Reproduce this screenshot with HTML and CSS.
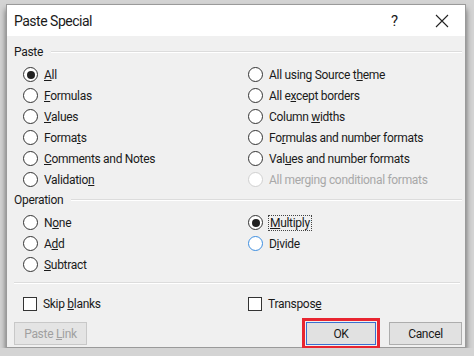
FILE: index.html
```html
<!DOCTYPE html>
<html lang="en">
<head>
    <meta charset="UTF-8">
    <title>Paste Special</title>
    <link rel="stylesheet" href="styles.css">
</head>
<body>

<div class="dialog">
    <div class="titlebar">
        <span class="title">Paste Special</span>
        <span class="help">?</span>
        <span class="close">
            <svg width="14" height="14" viewBox="0 0 14 14"><path d="M1 1L13 13M13 1L1 13" stroke="#222" stroke-width="1.1" fill="none"/></svg>
        </span>
    </div>

    <div class="content">
        <div class="group-title">Paste</div>
        <div class="options">
            <label class="opt"><span class="radio checked"></span><span><u>A</u>ll</span></label>
            <label class="opt"><span class="radio"></span><span>All using Source t<u>h</u>eme</span></label>
            <label class="opt"><span class="radio"></span><span><u>F</u>ormulas</span></label>
            <label class="opt"><span class="radio"></span><span>All e<u>x</u>cept borders</span></label>
            <label class="opt"><span class="radio"></span><span><u>V</u>alues</span></label>
            <label class="opt"><span class="radio"></span><span>Column <u>w</u>idths</span></label>
            <label class="opt"><span class="radio"></span><span>Forma<u>t</u>s</span></label>
            <label class="opt"><span class="radio"></span><span>Fo<u>r</u>mulas and number formats</span></label>
            <label class="opt"><span class="radio"></span><span><u>C</u>omments and Notes</span></label>
            <label class="opt"><span class="radio"></span><span>Val<u>u</u>es and number formats</span></label>
            <label class="opt"><span class="radio"></span><span>Validatio<u>n</u></span></label>
            <label class="opt disabled"><span class="radio"></span><span>All merging conditional formats</span></label>
        </div>

        <div class="group-title op">Operation</div>
        <div class="options">
            <label class="opt"><span class="radio"></span><span>N<u>o</u>ne</span></label>
            <label class="opt"><span class="radio checked"></span><span class="focus"><u>M</u>ultiply</span></label>
            <label class="opt"><span class="radio"></span><span>A<u>d</u>d</span></label>
            <label class="opt"><span class="radio hover"></span><span>D<u>i</u>vide</span></label>
            <label class="opt"><span class="radio"></span><span><u>S</u>ubtract</span></label>
        </div>

        <div class="divider"></div>

        <div class="options checks">
            <label class="opt"><span class="check"></span><span>Skip <u>b</u>lanks</span></label>
            <label class="opt"><span class="check"></span><span>Transpos<u>e</u></span></label>
        </div>

        <div class="buttons">
            <button class="btn disabled">Paste <u>L</u>ink</button>
            <span class="spacer"></span>
            <span class="mark"><button class="btn">OK</button></span>
            <button class="btn">Cancel</button>
        </div>
    </div>
</div>

</body>
</html>
```

FILE: styles.css
```css
body {
    margin: 0;
    background-color: #d4d4d4;
    font-family: Roboto, Arial, sans-serif;
    font-size: 12px;
    letter-spacing: -0.3px;
    color: #1a1a1a;
}
.dialog {
    margin: 4px 0 0 6px;
    width: 458px;
    height: 342px;
    background-color: #f0f0f0;
    border: 1px solid #9a9a9a;
    box-shadow: 0 5px 6px rgba(0, 0, 0, 0.55);
}
.titlebar {
    display: flex;
    align-items: center;
    height: 31px;
    background-color: #fff;
    padding-left: 7px;
}
.title {
    flex: 1;
    font-size: 14px;
    letter-spacing: -0.5px;
}
.help {
    font-size: 15px;
    width: 47px;
    text-align: center;
}
.close {
    width: 47px;
    display: flex;
    justify-content: center;
}
.content {
    padding: 8px 3px 0 7px;
}
.group-title {
    display: flex;
    align-items: center;
    gap: 8px;
    height: 16px;
}
.group-title::after {
    content: "";
    flex: 1;
    border-top: 1px solid #dcdcdc;
    border-bottom: 1px solid #fff;
}
.group-title.op {
    margin-top: 2px;
}
.options {
    display: grid;
    grid-template-columns: 225px 1fr;
    grid-auto-rows: 21px;
    padding: 4px 0 0 9px;
}
.opt {
    display: flex;
    align-items: center;
    gap: 6px;
}
.radio {
    box-sizing: border-box;
    width: 15px;
    height: 15px;
    border: 1px solid #333;
    border-radius: 50%;
    background-color: #fff;
    display: flex;
    align-items: center;
    justify-content: center;
}
.radio.checked::after {
    content: "";
    width: 8px;
    height: 8px;
    border-radius: 50%;
    background-color: #222;
}
.radio.hover {
    border-color: #3d8ee0;
}
.opt.disabled {
    color: #a8a8a8;
}
.opt.disabled .radio {
    border-color: #d0d0d0;
}
.focus {
    outline: 1px dotted #444;
    outline-offset: 0;
    padding: 0 1px;
}
.divider {
    margin: 7px 2px 0 0;
    border-top: 1px solid #dcdcdc;
    border-bottom: 1px solid #fff;
}
.options.checks {
    padding-top: 9px;
}
.check {
    box-sizing: border-box;
    width: 14px;
    height: 14px;
    border: 1px solid #333;
    background-color: #fff;
}
.buttons {
    display: flex;
    align-items: center;
    gap: 9px;
    margin-top: 4px;
}
.spacer {
    flex: 1;
}
.btn {
    font-family: inherit;
    font-size: 12px;
    letter-spacing: -0.3px;
    color: #1a1a1a;
    width: 73px;
    height: 23px;
    padding: 0;
    background-color: #e1e1e1;
    border: 1px solid #adadad;
}
.btn.disabled {
    color: #a0a0a0;
    border-color: #c8c8c8;
    background-color: #e4e4e4;
}
.mark {
    display: flex;
    border: 3px solid #e82530;
    padding: 1px;
}
.mark .btn {
    width: 70px;
    border-color: #3a6fd0;
    border-width: 1px;
}
```
